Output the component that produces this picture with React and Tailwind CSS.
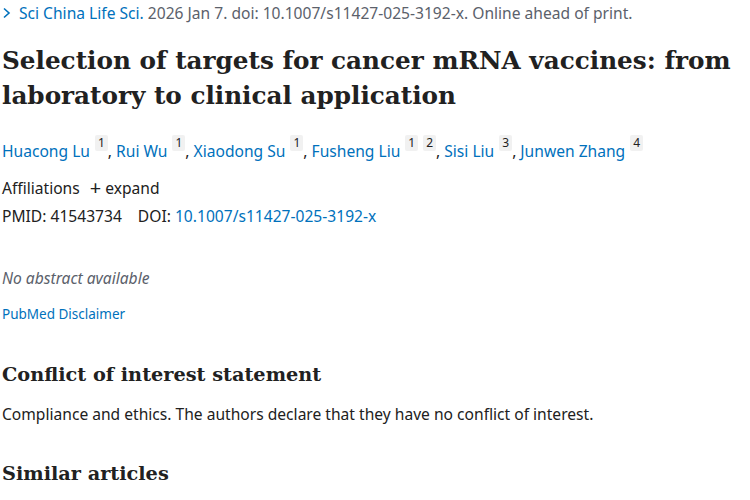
export default function App() {
  const Sup = ({ n }) => (
    <sup className="ml-[5px] inline-block rounded-[2px] bg-[#f1f1f1] px-[3px] text-[12px] leading-[16px] text-[#212121] align-[4px]">{n}</sup>
  );
  const A = ({ children }) => <a className="text-[#0071bc]">{children}</a>;
  return (
    <div className="w-[750px] h-[500px] overflow-hidden bg-white pl-[2px] text-[#212121] font-['Noto_Sans',sans-serif] text-[15.6px]">
      <div className="pt-[3px] leading-[20px] text-[#5b616b] flex items-center">
        <svg width="10" height="14" viewBox="0 0 10 14" className="mr-[7px]">
          <path d="M2 2.5 L7 7 L2 11.5" fill="none" stroke="#0071bc" strokeWidth="1.6" />
        </svg>
        <span className="text-[#0071bc]">Sci China Life Sci.</span>
        <span>&nbsp;2026 Jan 7. doi: 10.1007/s11427-025-3192-x. Online ahead of print.</span>
      </div>
      <h1 className="mt-[20px] font-['DejaVu_Serif',serif] font-bold text-[24.7px] leading-[35px] text-[#212121]">
        Selection of targets for cancer mRNA vaccines: from laboratory to clinical application
      </h1>
      <div className="mt-[26px] leading-[24px]">
        <A>Huacong Lu</A><Sup n="1" />, <A>Rui Wu</A><Sup n="1" />, <A>Xiaodong Su</A><Sup n="1" />, <A>Fusheng Liu</A><Sup n="1" /><Sup n="2" />, <A>Sisi Liu</A><Sup n="3" />, <A>Junwen Zhang</A><Sup n="4" />
      </div>
      <div className="mt-[14px] leading-[22px] flex items-center">
        <span>Affiliations</span>
        <span className="ml-[10px] text-[20px] leading-[20px] mr-[4px]">+</span>
        <span>expand</span>
      </div>
      <div className="mt-[6px] leading-[22px]">
        <span>PMID: 41543734</span>
        <span className="ml-[16px]">DOI: </span><A>10.1007/s11427-025-3192-x</A>
      </div>
      <div className="mt-[40px] leading-[22px] italic text-[#5b616b]">No abstract available</div>
      <div className="mt-[15px] text-[13.5px] leading-[20px] text-[#0071bc]">PubMed Disclaimer</div>
      <h2 className="mt-[36px] font-['DejaVu_Serif',serif] font-bold text-[19.3px] leading-[30px]">Conflict of interest statement</h2>
      <div className="mt-[13px] leading-[22px]">Compliance and ethics. The authors declare that they have no conflict of interest.</div>
      <h2 className="mt-[34px] font-['DejaVu_Serif',serif] font-bold text-[19.3px] leading-[30px]">Similar articles</h2>
    </div>
  );
}
